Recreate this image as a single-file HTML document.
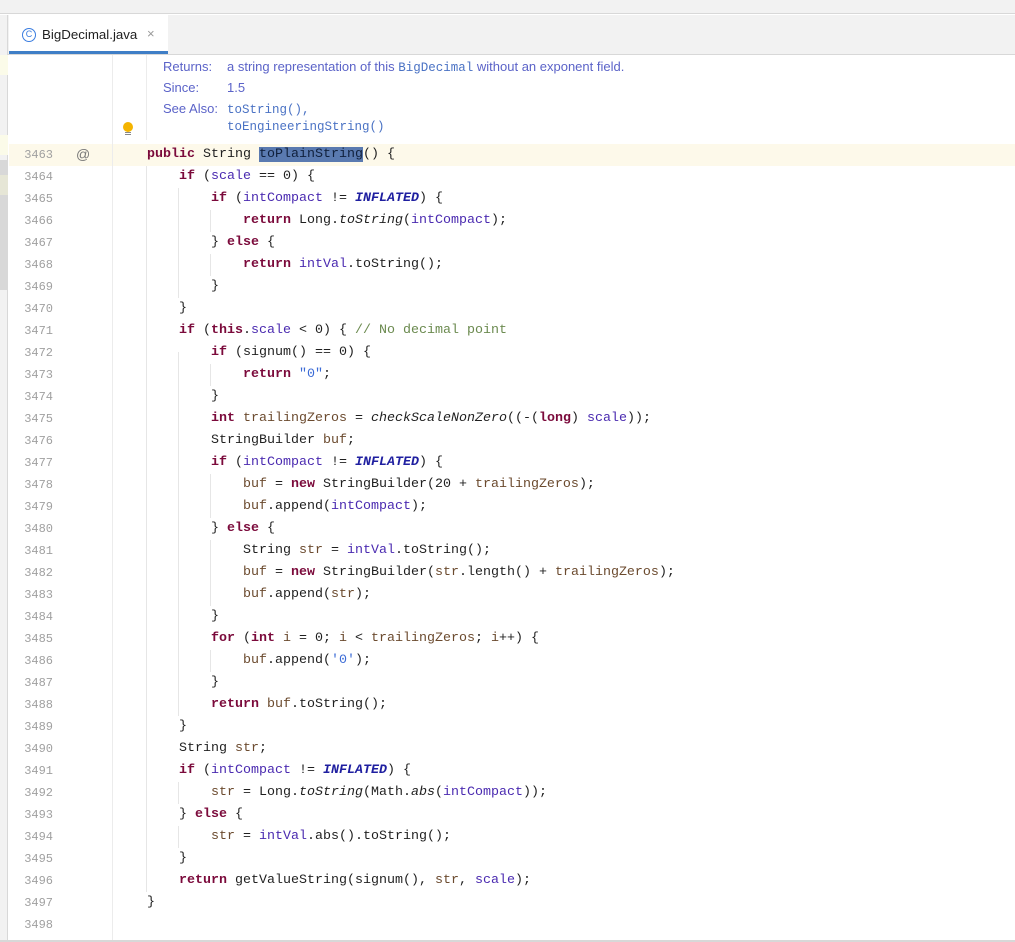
<!DOCTYPE html>
<html><head><meta charset="utf-8"><style>
*{margin:0;padding:0;box-sizing:border-box}
body{width:1015px;height:942px;background:#fff;position:relative;overflow:hidden;font-family:"Liberation Sans",sans-serif}
.abs{position:absolute}
.code{position:absolute;left:147px;top:144px;font-family:"Liberation Mono",monospace;font-size:13.33px;color:#1f1f1f}
.code div{height:22px;line-height:22px;white-space:pre}
.ln{position:absolute;left:9px;width:44px;top:144px;font-family:"Liberation Mono",monospace;font-size:12px;color:#a0a0a0;text-align:right}
.ln div{height:22px;line-height:22px}
.k{color:#7b0a3b;font-weight:bold}
.f{color:#4a2ab0}
.l{color:#6b4a2e}
.c{color:#1f1fa0;font-weight:bold;font-style:italic}
.i{font-style:italic}
.s{color:#3b6bd6}
.cm{color:#6b8a4f}
.sel{background:#5a7ab0;color:#10203c}
.g{position:absolute;width:1px;background:#e6e6e6}
.doc{position:absolute;font-size:13px;color:#5b63c8;white-space:nowrap}
.dm{font-family:"Liberation Mono",monospace;font-size:12.5px;color:#4a72c4}
</style></head><body>
<div class="abs" style="left:0;top:0;width:1015px;height:14px;background:#f2f2f2;border-bottom:1px solid #d8d8d8"></div>
<div class="abs" style="left:0;top:15px;width:1015px;height:40px;background:#f2f2f2;border-bottom:1px solid #d8d8d8"></div>
<div class="abs" style="left:9px;top:15px;width:159px;height:39px;background:#fff"></div>
<div class="abs" style="left:9px;top:51px;width:159px;height:3px;background:#3f7ec6"></div>
<div class="abs" style="left:22px;top:28px;width:14px;height:14px;border:1.4px solid #3a7de0;border-radius:50%;color:#3a7de0;font-size:9px;line-height:11px;text-align:center">C</div>
<div class="abs" style="left:42px;top:27px;font-size:13.3px;color:#1f1f1f">BigDecimal.java</div>
<div class="abs" style="left:147px;top:26px;font-size:13px;color:#999">×</div>
<div class="abs" style="left:0;top:15px;width:8px;height:927px;background:#f2f2f2;border-right:1px solid #d8d8d8"></div>
<div class="abs" style="left:0;top:55px;width:8px;height:20px;background:#fbfbe9"></div>
<div class="abs" style="left:0;top:135px;width:8px;height:20px;background:#fbfbe9"></div>
<div class="abs" style="left:0;top:160px;width:8px;height:130px;background:#d8d8d8"></div>
<div class="abs" style="left:0;top:175px;width:8px;height:20px;background:#e6e6d6"></div>
<div class="abs" style="left:9px;top:144px;width:1006px;height:22px;background:#fdf9ea"></div>
<div class="abs" style="left:112px;top:55px;width:1px;height:885px;background:#ececec"></div>
<div class="abs" style="left:146px;top:55px;width:1px;height:85px;background:#ececec"></div>
<div class="abs" style="left:0;top:940px;width:1015px;height:2px;background:#d8d8d8"></div>
<div class="doc" style="left:163px;top:59px">Returns:</div>
<div class="doc" style="left:227px;top:59px">a string representation of this <span class="dm">BigDecimal</span> without an exponent field.</div>
<div class="doc" style="left:163px;top:80px">Since:</div>
<div class="doc" style="left:227px;top:80px">1.5</div>
<div class="doc" style="left:163px;top:101px">See Also:</div>
<div class="doc" style="left:227px;top:101px"><span class="dm">toString(),</span></div>
<div class="doc" style="left:227px;top:118px"><span class="dm">toEngineeringString()</span></div>
<div class="abs" style="left:123px;top:122px;width:10px;height:10px;border-radius:50%;background:#f4b400"></div>
<div class="abs" style="left:125px;top:132px;width:6px;height:1px;background:#888;box-shadow:0 2px 0 #888"></div>
<div class="abs" style="left:76px;top:146px;font-size:14px;color:#777">@</div>
<div class="g" style="left:146px;top:166px;height:726px"></div>
<div class="g" style="left:178px;top:188px;height:110px"></div>
<div class="g" style="left:178px;top:352px;height:364px"></div>
<div class="g" style="left:178px;top:782px;height:22px"></div>
<div class="g" style="left:178px;top:826px;height:22px"></div>
<div class="g" style="left:210px;top:210px;height:22px"></div>
<div class="g" style="left:210px;top:254px;height:22px"></div>
<div class="g" style="left:210px;top:364px;height:22px"></div>
<div class="g" style="left:210px;top:474px;height:44px"></div>
<div class="g" style="left:210px;top:540px;height:66px"></div>
<div class="g" style="left:210px;top:650px;height:22px"></div>
<div class="ln"><div>3463</div><div>3464</div><div>3465</div><div>3466</div><div>3467</div><div>3468</div><div>3469</div><div>3470</div><div>3471</div><div>3472</div><div>3473</div><div>3474</div><div>3475</div><div>3476</div><div>3477</div><div>3478</div><div>3479</div><div>3480</div><div>3481</div><div>3482</div><div>3483</div><div>3484</div><div>3485</div><div>3486</div><div>3487</div><div>3488</div><div>3489</div><div>3490</div><div>3491</div><div>3492</div><div>3493</div><div>3494</div><div>3495</div><div>3496</div><div>3497</div><div>3498</div></div>
<div class="code"><div><span class="k">public</span> String <span class="sel">toPlainString</span>() {</div><div>    <span class="k">if</span> (<span class="f">scale</span> == 0) {</div><div>        <span class="k">if</span> (<span class="f">intCompact</span> != <span class="c">INFLATED</span>) {</div><div>            <span class="k">return</span> Long.<span class="i">toString</span>(<span class="f">intCompact</span>);</div><div>        } <span class="k">else</span> {</div><div>            <span class="k">return</span> <span class="f">intVal</span>.toString();</div><div>        }</div><div>    }</div><div>    <span class="k">if</span> (<span class="k">this</span>.<span class="f">scale</span> &lt; 0) { <span class="cm">// No decimal point</span></div><div>        <span class="k">if</span> (signum() == 0) {</div><div>            <span class="k">return</span> <span class="s">"0"</span>;</div><div>        }</div><div>        <span class="k">int</span> <span class="l">trailingZeros</span> = <span class="i">checkScaleNonZero</span>((-(<span class="k">long</span>) <span class="f">scale</span>));</div><div>        StringBuilder <span class="l">buf</span>;</div><div>        <span class="k">if</span> (<span class="f">intCompact</span> != <span class="c">INFLATED</span>) {</div><div>            <span class="l">buf</span> = <span class="k">new</span> StringBuilder(20 + <span class="l">trailingZeros</span>);</div><div>            <span class="l">buf</span>.append(<span class="f">intCompact</span>);</div><div>        } <span class="k">else</span> {</div><div>            String <span class="l">str</span> = <span class="f">intVal</span>.toString();</div><div>            <span class="l">buf</span> = <span class="k">new</span> StringBuilder(<span class="l">str</span>.length() + <span class="l">trailingZeros</span>);</div><div>            <span class="l">buf</span>.append(<span class="l">str</span>);</div><div>        }</div><div>        <span class="k">for</span> (<span class="k">int</span> <span class="l">i</span> = 0; <span class="l">i</span> &lt; <span class="l">trailingZeros</span>; <span class="l">i</span>++) {</div><div>            <span class="l">buf</span>.append(<span class="s">'0'</span>);</div><div>        }</div><div>        <span class="k">return</span> <span class="l">buf</span>.toString();</div><div>    }</div><div>    String <span class="l">str</span>;</div><div>    <span class="k">if</span> (<span class="f">intCompact</span> != <span class="c">INFLATED</span>) {</div><div>        <span class="l">str</span> = Long.<span class="i">toString</span>(Math.<span class="i">abs</span>(<span class="f">intCompact</span>));</div><div>    } <span class="k">else</span> {</div><div>        <span class="l">str</span> = <span class="f">intVal</span>.abs().toString();</div><div>    }</div><div>    <span class="k">return</span> getValueString(signum(), <span class="l">str</span>, <span class="f">scale</span>);</div><div>}</div><div></div></div>
</body></html>
